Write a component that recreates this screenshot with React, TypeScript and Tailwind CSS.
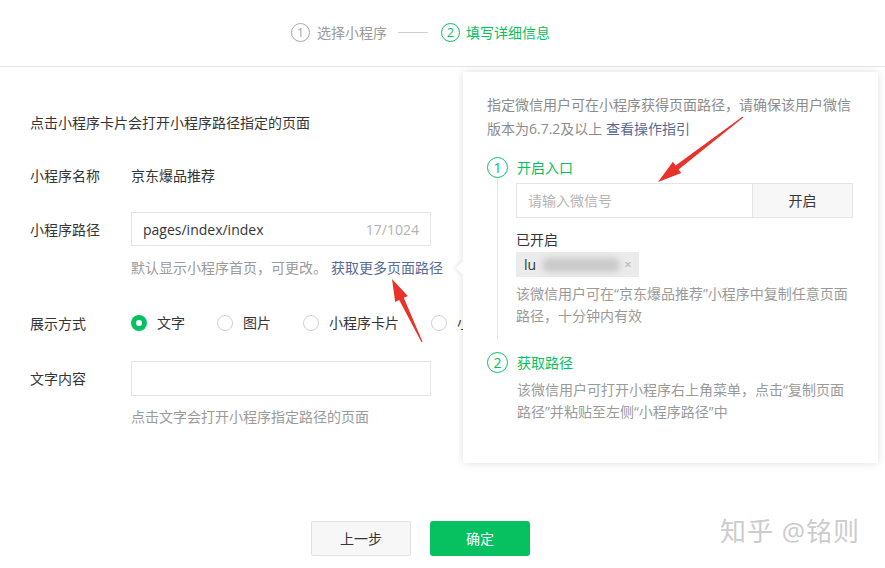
import React from "react";

const FONT = { fontFamily: '"Open Sans", "Noto Sans CJK SC", sans-serif' };

function Radio({ checked, label }: { checked?: boolean; label: string }) {
  return (
    <div className="flex items-center">
      {checked ? (
        <span className="w-4 h-4 rounded-full bg-[#07c160] flex items-center justify-center">
          <span className="w-[6px] h-[6px] rounded-full bg-white" />
        </span>
      ) : (
        <span className="w-4 h-4 rounded-full border border-[#d0d0d0] bg-white" />
      )}
      <span className="ml-[10px] text-[14px] leading-5 text-[#353535]">{label}</span>
    </div>
  );
}

function StepCircle({ n, green }: { n: number; green?: boolean }) {
  return (
    <span
      className={
        green
          ? "w-[19px] h-[19px] rounded-full border border-[#07c160] text-[#07c160] flex items-center justify-center text-[13px] leading-none"
          : "w-[19px] h-[19px] rounded-full border border-[#a8a8a8] text-[#a8a8a8] flex items-center justify-center text-[13px] leading-none"
      }
    >
      {n}
    </span>
  );
}

function BigStep({ n }: { n: number }) {
  return (
    <span className="w-[21px] h-[21px] rounded-full border border-[#07c160] text-[#07c160] flex items-center justify-center text-[14px] leading-none shrink-0">
      {n}
    </span>
  );
}

export default function App() {
  return (
    <div className="relative w-[885px] h-[568px] overflow-hidden bg-white text-[#353535]" style={FONT}>
      {/* header */}
      <div className="h-[67px] border-b border-[#e5e5e5] flex items-center pl-[291px] pb-[1px]">
        <div className="flex items-center">
          <StepCircle n={1} />
          <span className="ml-[7px] text-[14px] text-[#9a9a9a]">选择小程序</span>
          <span className="ml-[11px] w-[30px] h-px bg-[#cfcfcf]" />
          <span className="ml-[13px]">
            <StepCircle n={2} green />
          </span>
          <span className="ml-[6px] text-[14px] text-[#07c160]">填写详细信息</span>
        </div>
      </div>

      {/* form */}
      <div className="pl-[30px] pt-[46px]">
        <div className="text-[14px] leading-5">点击小程序卡片会打开小程序路径指定的页面</div>

        <div className="flex items-center mt-[32px] h-5">
          <div className="w-[101px] text-[14px]">小程序名称</div>
          <div className="text-[14px]">京东爆品推荐</div>
        </div>

        <div className="flex items-center mt-[27px]">
          <div className="w-[101px] text-[14px]">小程序路径</div>
          <div className="w-[300px] h-[34px] border border-[#e5e5e5] flex items-center justify-between pl-[11px] pr-[11px]">
            <span className="text-[14px]">pages/index/index</span>
            <span className="text-[14px] text-[#b2b2b2]">17/1024</span>
          </div>
        </div>
        <div className="ml-[101px] mt-[12px] leading-5 text-[14px]">
          <span className="text-[#9a9a9a]">默认显示小程序首页，可更改。</span>
          <span className="ml-[4px] text-[#576b95]">获取更多页面路径</span>
        </div>

        <div className="flex items-center mt-[35px] h-5">
          <div className="w-[101px] text-[14px]">展示方式</div>
          <div className="flex items-center gap-[32px]">
            <Radio checked label="文字" />
            <Radio label="图片" />
            <Radio label="小程序卡片" />
            <Radio label="小程序" />
          </div>
        </div>

        <div className="flex items-center mt-[28px]">
          <div className="w-[101px] text-[14px]">文字内容</div>
          <div className="w-[300px] h-[35px] border border-[#e5e5e5]" />
        </div>
        <div className="ml-[101px] mt-[11px] leading-5 text-[14px] text-[#9a9a9a]">
          点击文字会打开小程序指定路径的页面
        </div>

        <div className="flex mt-[94px] ml-[281px] gap-[19px]">
          <div className="w-[100px] h-[35px] border border-[#e2e2e2] bg-[#f7f7f7] rounded-[2px] flex items-center justify-center text-[14px]">
            上一步
          </div>
          <div className="w-[100px] h-[35px] bg-[#07c160] rounded-[3px] flex items-center justify-center text-[14px] text-white">
            确定
          </div>
        </div>
      </div>

      {/* popover */}
      <div className="absolute left-[463px] top-[72px] w-[415px] h-[391px] bg-white shadow-[0_0_8px_rgba(0,0,0,0.13)] z-10">
        <div className="absolute -left-[5px] top-[191px] w-[10px] h-[10px] bg-white rotate-45 shadow-[-2px_2px_4px_rgba(0,0,0,0.06)]" />
        <div className="relative pt-[21px] pl-[24px] pr-[20px]">
          <div className="text-[14px] leading-[24px] text-[#8c8c8c]">
            指定微信用户可在小程序获得页面路径，请确保该用户微信
            <br />
            版本为6.7.2及以上 <span className="text-[#576b95]">查看操作指引</span>
          </div>

          <div className="flex items-center mt-[16px] h-[21px]">
            <BigStep n={1} />
            <span className="ml-[9px] text-[14px] text-[#07c160]">开启入口</span>
          </div>
          <div className="ml-[10px] border-l border-[#e5e5e5] pl-[18px] pt-[5px] pb-[13px]">
            <div className="flex h-[35px]">
              <div className="w-[237px] border border-[#e5e5e5] flex items-center pl-[11px] text-[14px] text-[#b5b5b5]">
                请输入微信号
              </div>
              <div className="w-[100px] border border-l-0 border-[#e5e5e5] bg-[#f7f7f7] flex items-center justify-center text-[14px]">
                开启
              </div>
            </div>
            <div className="mt-[12px] text-[14px] leading-5">已开启</div>
            <div className="mt-[2px] w-[123px] h-[25px] bg-[#ebebeb] flex items-center pl-[8px] relative overflow-hidden">
              <span className="text-[14px]">lu</span>
              <span className="ml-[6px] w-[78px] h-[14px] rounded-full bg-[#c9c9c9] blur-[3px]" />
              <span className="ml-[4px] text-[13px] text-[#b0b0b0]">×</span>
            </div>
            <div className="mt-[6px] text-[14px] leading-[22px] text-[#9a9a9a]">
              该微信用户可在“京东爆品推荐”小程序中复制任意页面
              <br />
              路径，十分钟内有效
            </div>
          </div>

          <div className="flex items-center mt-[12px] h-[21px]">
            <BigStep n={2} />
            <span className="ml-[9px] text-[14px] text-[#07c160]">获取路径</span>
          </div>
          <div className="ml-[30px] mt-[6px] text-[14px] leading-[22px] text-[#9a9a9a]">
            该微信用户可打开小程序右上角菜单，点击“复制页面
            <br />
            路径”并粘贴至左侧“小程序路径”中
          </div>
        </div>
      </div>

      {/* watermark */}
      <div className="absolute left-[720px] top-[513px] text-[26px] leading-[36px] text-[#cccccc] z-20 tracking-[1px]">
        知乎 @铭则
      </div>

      {/* red arrows */}
      <svg className="absolute left-0 top-0 z-30 pointer-events-none" width="885" height="568" viewBox="0 0 885 568">
        <polygon
          fill="#e8322a"
          points="392,279 407.8,295.9 403.8,297.8 422.5,341.8 421.5,342.2 399.2,300 395.2,301.9"
        />
        <polygon
          fill="#e8322a"
          points="658,182 681.3,173 678.6,169.4 743.3,117.4 742.7,116.6 675.6,165.4 672.9,161.8"
        />
      </svg>
    </div>
  );
}
